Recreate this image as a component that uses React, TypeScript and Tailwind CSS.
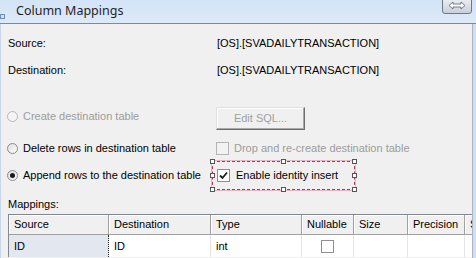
import React from "react";

const font = { fontFamily: '"Liberation Sans", Arial, sans-serif' };

const Radio = ({ checked, disabled }: { checked?: boolean; disabled?: boolean }) => (
    <span
        className={`relative flex h-[11px] w-[11px] shrink-0 items-center justify-center rounded-full border ${
            disabled ? "border-[#b8b8b8] bg-[#f4f4f4]" : "border-[#8a8a8a] bg-gradient-to-br from-[#dcdcdc] to-white"
        }`}
    >
        {checked && <span className="h-[5px] w-[5px] rounded-full bg-[#1a1a1a]" />}
    </span>
);

const Check = ({ checked, disabled }: { checked?: boolean; disabled?: boolean }) => (
    <span
        className={`flex h-[13px] w-[13px] shrink-0 items-center justify-center border ${
            disabled ? "border-[#b4b4b4] bg-[#f2f2f2]" : "border-[#8e8f8f] bg-white"
        }`}
    >
        {checked && (
            <svg width="9" height="9" viewBox="0 0 9 9">
                <path d="M1 4.5 L3.5 7 L8 1.5" stroke="#1b1b1b" strokeWidth="1.8" fill="none" />
            </svg>
        )}
    </span>
);

const Handle = ({ className }: { className: string }) => (
    <span className={`absolute h-[5px] w-[5px] border border-[#555] bg-white ${className}`} />
);

const cols = [
    { name: "Source", w: 100 },
    { name: "Destination", w: 102 },
    { name: "Type", w: 91 },
    { name: "Nullable", w: 52 },
    { name: "Size", w: 54 },
    { name: "Precision", w: 57 },
    { name: "Scale", w: 40 },
];

export default function App() {
    return (
        <div className="relative h-[258px] w-[476px] overflow-hidden bg-[#f0f0f0] text-[11px] text-black" style={font}>
            {/* title bar */}
            <div className="relative flex h-[24px] items-center border-b border-[#7d8a99] bg-gradient-to-b from-[#d3e4f7] to-[#dde9f7]">
                <span className="flex h-[14px] w-[7px] flex-col justify-end">
                    <span className="h-[5px] w-[5px] border border-[#6f8fb8] bg-[#cfe0f3]" />
                </span>
                <span
                    className="ml-[9px] text-[12.5px] text-[#1e1e1e]"
                    style={{ fontFamily: '"Noto Sans", "Open Sans", sans-serif' }}
                >
                    Column Mappings
                </span>
                <div className="absolute right-[4px] top-[-3px] flex h-[17px] w-[30px] items-center justify-center rounded-b-[3px] border border-[#6e7886] bg-gradient-to-b from-[#eef1f5] to-[#c9d0d9]">
                    <svg width="18" height="9" viewBox="0 0 18 9">
                        <path
                            d="M1 4.5 L5 1 L5 3 L13 3 L13 1 L17 4.5 L13 8 L13 6 L5 6 L5 8 Z"
                            fill="#fafbfc"
                            stroke="#5a6370"
                            strokeWidth="0.8"
                        />
                    </svg>
                </div>
            </div>

            <div className="absolute bottom-0 left-0 top-[24px] w-[1px] bg-[#c8d8ec]" />
            <div className="absolute bottom-0 right-0 top-[24px] w-[4px] border-l border-[#a9b7c8] bg-[#d2e0f1]" />

            <div className="pl-[8px]">
                <div className="flex h-[27px] items-center pt-[11px]">
                    <span className="w-[209px]">Source:</span>
                    <span>[OS].[SVADAILYTRANSACTION]</span>
                </div>
                <div className="flex h-[27px] items-center pt-[11px]">
                    <span className="w-[209px]">Destination:</span>
                    <span>[OS].[SVADAILYTRANSACTION]</span>
                </div>

                <div className="mt-[29px] flex h-[23px]">
                    <span className="flex w-[208px] items-center gap-[5px] pb-[4px] text-[#9c9c9c]">
                        <span className="-ml-[1px]">
                            <Radio disabled />
                        </span>
                        Create destination table
                    </span>
                    <div className="flex h-[23px] w-[89px] items-center justify-center border border-b-[#6f6f6f] border-l-[#e0e0e0] border-r-[#6f6f6f] border-t-[#e0e0e0] bg-[#f0f0f0] text-[#a0a0a0] shadow-[inset_-1px_-1px_0_#a9a9a9,inset_1px_1px_0_#fff]">
                        Edit SQL...
                    </div>
                </div>

                <div className="mt-[12px] flex h-[13px] items-center">
                    <span className="flex w-[208px] items-center gap-[5px]">
                        <span className="-ml-[1px]">
                            <Radio />
                        </span>
                        Delete rows in destination table
                    </span>
                    <span className="flex items-center gap-[5px] text-[#9c9c9c]">
                        <Check disabled />
                        Drop and re-create destination table
                    </span>
                </div>

                <div className="mt-[6px] flex h-[29px] items-center">
                    <span className="flex w-[204px] items-center gap-[5px]">
                        <span className="-ml-[1px]">
                            <Radio checked />
                        </span>
                        Append rows to the destination table
                    </span>
                    <div className="relative flex h-[29px] w-[143px] items-center gap-[6px] border border-dashed border-[#b0305c] pl-[4px] outline outline-1 outline-[#e7b5c6]">
                        <Check checked />
                        Enable identity insert
                        <Handle className="-left-[3px] -top-[3px]" />
                        <Handle className="left-[68px] -top-[3px]" />
                        <Handle className="-right-[3px] -top-[3px]" />
                        <Handle className="-left-[3px] top-[11px]" />
                        <Handle className="-right-[3px] top-[11px]" />
                        <Handle className="-bottom-[3px] -left-[3px]" />
                        <Handle className="-bottom-[3px] left-[68px]" />
                        <Handle className="-bottom-[3px] -right-[3px]" />
                    </div>
                </div>

                <div className="mt-[8px] h-[13px] leading-[13px]">Mappings:</div>

                <div className="mt-[3px] w-[464px] overflow-hidden border-l border-t border-[#828790] bg-white">
                    <div className="flex h-[20px] bg-[#f0f0f0]">
                        {cols.map((c) => (
                            <div
                                key={c.name}
                                className="flex shrink-0 items-center overflow-hidden whitespace-nowrap border-b border-r border-b-[#a0a0a0] border-r-[#a0a0a0] pl-[5px] shadow-[inset_1px_1px_0_#fff]"
                                style={{ width: c.w }}
                            >
                                {c.name}
                            </div>
                        ))}
                    </div>
                    <div className="flex h-[22px]">
                        <div className="flex w-[100px] shrink-0 items-center border-r border-dotted border-[#222] bg-[#e3e8f0] pl-[5px]">
                            ID
                        </div>
                        <div className="flex w-[102px] shrink-0 items-center border-r border-[#e4e4e4] pl-[5px]">ID</div>
                        <div className="flex w-[91px] shrink-0 items-center border-r border-[#e4e4e4] pl-[5px]">int</div>
                        <div className="flex w-[52px] shrink-0 items-center justify-center border-r border-[#e4e4e4]">
                            <span className="h-[13px] w-[13px] border border-[#8e8f8f] bg-white" />
                        </div>
                        <div className="w-[54px] shrink-0 border-r border-[#e4e4e4]" />
                        <div className="w-[57px] shrink-0 border-r border-[#e4e4e4]" />
                        <div className="w-[40px] shrink-0" />
                    </div>
                </div>
            </div>
        </div>
    );
}
